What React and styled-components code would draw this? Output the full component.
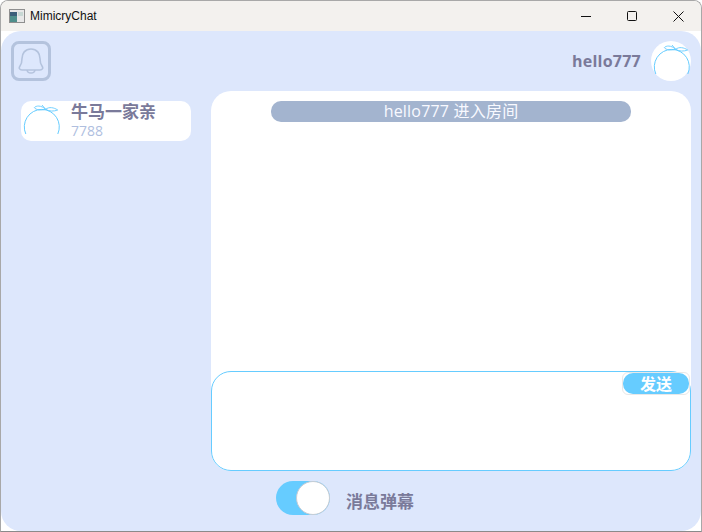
import React from "react";
import styled, { createGlobalStyle } from "styled-components";

const Global = createGlobalStyle`
  html, body { margin: 0; padding: 0; background: #fff; }
  body { font-family: "Open Sans", "Noto Sans CJK SC", sans-serif; }
  * { box-sizing: border-box; }
`;
const Window = styled.div`
  width: 702px; height: 532px; display: flex; flex-direction: column;
  border: 1px solid #a8a8a8; border-bottom-color: #8a8a8a; border-radius: 8px 8px 0 0;
  overflow: hidden; background: #fff;
`;
const TitleBar = styled.div`
  height: 30px; flex: none; display: flex; align-items: center; background: #f3f1ee; padding-left: 8px;
`;
const AppIcon = styled.svg`width: 16px; height: 14px; flex: none; margin-right: 5px;`;
const AppTitle = styled.span`
  font: 12px "Liberation Sans", sans-serif; color: #111; flex: 1;
`;
const WinButton = styled.div`
  width: 46px; height: 30px; display: flex; align-items: center; justify-content: center; flex: none;
`;
const Main = styled.div`
  flex: 1; min-height: 0; background: #dde7fc; border-radius: 20px;
  display: flex; flex-direction: column; padding: 10px 10px 0 10px;
`;
const Header = styled.div`
  display: flex; align-items: flex-start; justify-content: space-between; height: 50px; flex: none;
`;
const BellBox = styled.div`
  width: 40px; height: 40px; border: 3px solid #b4c3dd; border-radius: 8px;
  display: flex; align-items: center; justify-content: center;
`;
const User = styled.div`display: flex; align-items: center; gap: 10px;`;
const BoldName = styled.span`
  font: bold 16px "Open Sans", "Noto Sans CJK SC", sans-serif; color: #7a7a9a; letter-spacing: 0.25px;
`;
const AvatarCircle = styled.div`
  width: 40px; height: 40px; border-radius: 50%; background: #fff; flex: none;
`;
const Body = styled.div`flex: 1; display: flex; min-height: 0; gap: 20px;`;
const Sidebar = styled.div`width: 180px; flex: none; padding: 10px 0 0 10px;`;
const ContactCard = styled.div`
  height: 40px; background: #fff; border-radius: 10px; display: flex; align-items: flex-start; gap: 10px;
`;
const ContactText = styled.div`display: flex; flex-direction: column;`;
const ContactName = styled.span`
  font: bold 17px/20px "Noto Sans CJK SC", sans-serif; color: #7a7a9a;
`;
const ContactId = styled.span`
  font: 14px/19px "Open Sans", sans-serif; color: #b0bfdf;
`;
const ChatColumn = styled.div`flex: 1; display: flex; flex-direction: column; min-width: 0;`;
const ChatPanel = styled.div`
  height: 380px; background: #fff; border-radius: 20px; display: flex; flex-direction: column;
`;
const Messages = styled.div`flex: 1; padding-top: 10px; display: flex; justify-content: center;`;
const Notice = styled.div`
  width: 360px; height: 21px; border-radius: 10px; background: #a3b4cf; color: #f8f9ff;
  font: 16px/21px "Open Sans", "Noto Sans CJK SC", sans-serif; text-align: center; letter-spacing: 0.2px;
`;
const Composer = styled.div`
  height: 100px; flex: none; border: 1px solid #66ccff; border-radius: 20px; padding: 0 0 0 0;
  display: flex; justify-content: flex-end; align-items: flex-start;
`;
const SendButton = styled.button`
  width: 68px; height: 23px; padding: 0; border: 1px solid #e8e8e8; border-radius: 6px; background: #fff;
  display: flex; overflow: hidden;
`;
const SendLabel = styled.span`
  flex: 1; border-radius: 10px; background: #66ccff; color: #fff; text-align: center;
  font: bold 16px/21px "Noto Sans CJK SC", sans-serif;
`;
const Footer = styled.div`
  flex: 1; display: flex; align-items: flex-start; gap: 16px; padding: 10px 0 0 65px;
`;
const Track = styled.div`
  width: 54px; height: 34px; border-radius: 17px; background: #66ccff; display: flex; justify-content: flex-end;
`;
const Knob = styled.div`
  width: 34px; height: 34px; border-radius: 50%; background: #fff; border: 1px solid #c8ccd4;
`;
const ToggleLabel = styled.span`
  font: bold 17px/40px "Noto Sans CJK SC", sans-serif; color: #7a7a9a;
`;

function Peach({ size = 40 }) {
  return (
    <svg width={size} height={size} viewBox="0 0 40 40" fill="none" stroke="#66ccff" strokeWidth="1" style={{ flex: "none", display: "block" }}>
      <path d="M4.8 33 A17.5 17.5 0 1 1 36.8 33" />
      <path d="M24.7 8.3 C20 4 15 4.5 13.3 6.7 C15 9 20 9.5 24.7 8.3 C28 5.5 33 6.5 36.7 9 C33 10.5 28 10.5 24.7 8.3 L21 4" strokeWidth="0.9" />
    </svg>
  );
}

export default function App() {
  return (
    <>
      <Global />
      <Window>
        <TitleBar>
          <AppIcon viewBox="0 0 16 14">
            <rect x="0.5" y="0.5" width="15" height="13" fill="#e8e8e8" stroke="#8f8f8f" />
            <rect x="1" y="3" width="7" height="10" fill="#4f8f8c" />
            <rect x="1" y="3" width="7" height="4" fill="#3b5f7a" />
            <rect x="9" y="3" width="5" height="4" fill="#c8d8d4" />
          </AppIcon>
          <AppTitle>MimicryChat</AppTitle>
          <WinButton>
            <svg width="10" height="10" viewBox="0 0 10 10"><path d="M0 5.5H10" stroke="#111" /></svg>
          </WinButton>
          <WinButton>
            <svg width="10" height="10" viewBox="0 0 10 10" fill="none"><rect x="0.5" y="0.5" width="9" height="9" rx="1" stroke="#111" /></svg>
          </WinButton>
          <WinButton>
            <svg width="11" height="11" viewBox="0 0 11 11"><path d="M0.5 0.5L10.5 10.5M10.5 0.5L0.5 10.5" stroke="#111" /></svg>
          </WinButton>
        </TitleBar>
        <Main>
          <Header>
            <BellBox>
              <svg width="26" height="28" viewBox="0 0 26 28" fill="none" stroke="#b4c3dd" strokeWidth="1.6">
                <path d="M13 2 C7 2 4 6.5 4 11.5 C4 15.5 3.5 17 2 19 C0.5 21 1.5 23 4 23 H22 C24.5 23 25.5 21 24 19 C22.5 17 22 15.5 22 11.5 C22 6.5 19 2 13 2 Z" />
                <path d="M9 23 C9.5 27 16.5 27 17 23" />
              </svg>
            </BellBox>
            <User>
              <BoldName>hello777</BoldName>
              <AvatarCircle><Peach /></AvatarCircle>
            </User>
          </Header>
          <Body>
            <Sidebar>
              <ContactCard>
                <Peach />
                <ContactText>
                  <ContactName>牛马一家亲</ContactName>
                  <ContactId>7788</ContactId>
                </ContactText>
              </ContactCard>
            </Sidebar>
            <ChatColumn>
              <ChatPanel>
                <Messages><Notice>hello777 进入房间</Notice></Messages>
                <Composer><SendButton><SendLabel>发送</SendLabel></SendButton></Composer>
              </ChatPanel>
              <Footer>
                <Track><Knob /></Track>
                <ToggleLabel>消息弹幕</ToggleLabel>
              </Footer>
            </ChatColumn>
          </Body>
        </Main>
      </Window>
    </>
  );
}
